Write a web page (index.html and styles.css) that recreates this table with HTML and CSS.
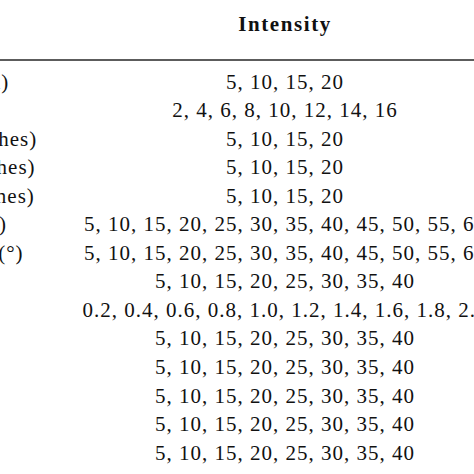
FILE: index.html
```html
<!DOCTYPE html>
<html lang="en">
<head>
  <meta charset="UTF-8" />
  <title>Perturbation intensities</title>
  <link rel="stylesheet" href="styles.css">
</head>
<body>
  <table class="levels">
    <colgroup>
      <col class="col-name" />
      <col class="col-values" />
    </colgroup>
    <thead>
      <tr>
        <th class="name">Type</th>
        <th class="values">Intensity</th>
      </tr>
    </thead>
    <tbody>
      <tr><td class="name">Defocus (px)</td><td class="values">5, 10, 15, 20</td></tr>
      <tr><td class="name">Noise level</td><td class="values">2, 4, 6, 8, 10, 12, 14, 16</td></tr>
      <tr><td class="name">Shift X (inches)</td><td class="values">5, 10, 15, 20</td></tr>
      <tr><td class="name">Shift Y (inches)</td><td class="values">5, 10, 15, 20</td></tr>
      <tr><td class="name">Shift Z (inches)</td><td class="values">5, 10, 15, 20</td></tr>
      <tr><td class="name">Contrast (%)</td><td class="values">5, 10, 15, 20, 25, 30, 35, 40, 45, 50, 55, 60</td></tr>
      <tr><td class="name">Pitch angle (°)</td><td class="values">5, 10, 15, 20, 25, 30, 35, 40, 45, 50, 55, 60</td></tr>
      <tr><td class="name">Exposure</td><td class="values">5, 10, 15, 20, 25, 30, 35, 40</td></tr>
      <tr><td class="name">Gamma</td><td class="values">0.2, 0.4, 0.6, 0.8, 1.0, 1.2, 1.4, 1.6, 1.8, 2.0</td></tr>
      <tr><td class="name">Hue</td><td class="values">5, 10, 15, 20, 25, 30, 35, 40</td></tr>
      <tr><td class="name">Saturation</td><td class="values">5, 10, 15, 20, 25, 30, 35, 40</td></tr>
      <tr><td class="name">Sharpness</td><td class="values">5, 10, 15, 20, 25, 30, 35, 40</td></tr>
      <tr><td class="name">Vignette</td><td class="values">5, 10, 15, 20, 25, 30, 35, 40</td></tr>
      <tr><td class="name">Glare</td><td class="values">5, 10, 15, 20, 25, 30, 35, 40</td></tr>
    </tbody>
  </table>
</body>
</html>
```

FILE: styles.css
```css
body {
  margin: 0;
  background: #fff;
  color: #111;
  font-family: "Liberation Serif", "DejaVu Serif", serif;
  overflow: hidden;
  width: 474px;
  height: 474px;
}
.levels {
  table-layout: fixed;
  border-collapse: collapse;
  width: 601px;
  margin-left: -113px;
  font-size: 21px;
  letter-spacing: 1px;
  line-height: 28.55px;
}
.col-name {
  width: 195px;
}
.col-values {
  width: 406px;
}
th, td {
  padding: 0;
  white-space: nowrap;
}
th {
  font-weight: bold;
  letter-spacing: 1.6px;
  padding-top: 10px;
  padding-bottom: 20px;
  border-bottom: 2px solid #5c5c5c;
}
.name {
  text-align: left;
}
.values {
  text-align: center;
}
tbody tr:first-child td {
  padding-top: 7px;
}
```
